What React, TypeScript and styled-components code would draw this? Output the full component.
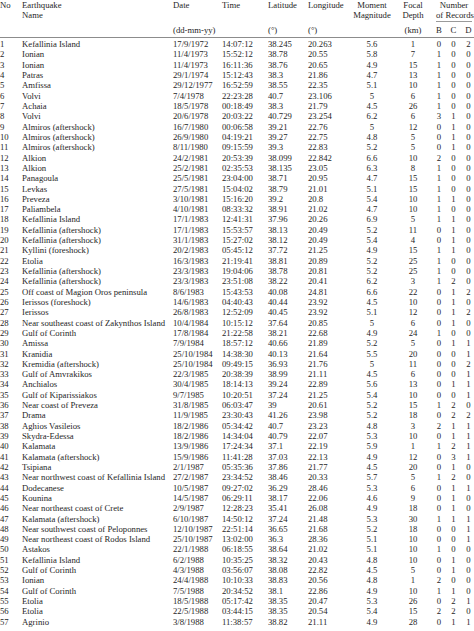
import React from "react";
import styled, { createGlobalStyle } from "styled-components";

const Global = createGlobalStyle`
  html, body {
    margin: 0;
    padding: 0;
    background: #ffffff;
    overflow: hidden;
  }
  body {
    font-family: "Liberation Serif", "Times New Roman", serif;
    color: #262626;
  }
`;

const Page = styled.div`
  width: 474px;
  height: 631px;
  overflow: hidden;
`;

const Table = styled.table`
  border-collapse: collapse;
  table-layout: fixed;
  width: 476px;
  font-family: "Liberation Serif", "Times New Roman", serif;
  color: #262626;
  font-size: 8.7px;
  line-height: 10.32px;
`;

const HeadCell = styled.th<{ $align?: "left" | "center"; $pt?: number; $pb?: number }>`
  font-weight: normal;
  padding: ${(p) => p.$pt ?? 0}px 0 ${(p) => p.$pb ?? 0}px 0;
  text-align: ${(p) => p.$align ?? "left"};
  vertical-align: top;
  white-space: nowrap;
`;

const GroupLabel = styled.div`
  margin: 0 4px 0 4px;
  text-align: center;
  border-bottom: 1px solid #9a9a9a;
`;

const UnitsRow = styled.tr`
  border-bottom: 1.6px solid #8c8c8c;
`;

const BodyRow = styled.tr<{ $first?: boolean }>`
  & > td {
    padding-top: ${(p) => (p.$first ? 1.2 : 0)}px;
  }
`;

const Cell = styled.td<{ $align?: "left" | "center" }>`
  padding: 0;
  text-align: ${(p) => p.$align ?? "left"};
  white-space: nowrap;
  overflow: visible;
`;

const widths = [22, 151, 49, 46, 40, 42, 44, 38, 14, 15, 15];

const rows: string[] = [
  "1|Kefallinia Island|17/9/1972|14:07:12|38.245|20.263|5.6|1|0|0|2",
  "2|Ionian|11/4/1973|15:52:12|38.78|20.55|5.8|7|1|0|0",
  "3|Ionian|11/4/1973|16:11:36|38.76|20.65|4.9|15|1|0|0",
  "4|Patras|29/1/1974|15:12:43|38.3|21.86|4.7|13|1|0|0",
  "5|Amfissa|29/12/1977|16:52:59|38.55|22.35|5.1|10|1|0|0",
  "6|Volvi|7/4/1978|22:23:28|40.7|23.106|5|6|1|0|0",
  "7|Achaia|18/5/1978|00:18:49|38.3|21.79|4.5|26|1|0|0",
  "8|Volvi|20/6/1978|20:03:22|40.729|23.254|6.2|6|3|1|0",
  "9|Almiros (aftershock)|16/7/1980|00:06:58|39.21|22.76|5|12|0|1|0",
  "10|Almiros (aftershock)|26/9/1980|04:19:21|39.27|22.75|4.8|5|0|1|0",
  "11|Almiros (aftershock)|8/11/1980|09:15:59|39.3|22.83|5.2|5|0|1|0",
  "12|Alkion|24/2/1981|20:53:39|38.099|22.842|6.6|10|2|0|0",
  "13|Alkion|25/2/1981|02:35:53|38.135|23.05|6.3|8|1|0|0",
  "14|Panagoula|25/5/1981|23:04:00|38.71|20.95|4.7|15|1|0|0",
  "15|Levkas|27/5/1981|15:04:02|38.79|21.01|5.1|15|1|0|0",
  "16|Preveza|3/10/1981|15:16:20|39.2|20.8|5.4|10|1|1|0",
  "17|Paliambela|4/10/1981|08:33:32|38.91|21.02|4.7|10|1|0|0",
  "18|Kefallinia Island|17/1/1983|12:41:31|37.96|20.26|6.9|5|1|1|0",
  "19|Kefallinia (aftershock)|17/1/1983|15:53:57|38.13|20.49|5.2|11|0|1|0",
  "20|Kefallinia (aftershock)|31/1/1983|15:27:02|38.12|20.49|5.4|4|0|1|0",
  "21|Kyllini (foreshock)|20/2/1983|05:45:12|37.72|21.25|4.9|15|1|1|0",
  "22|Etolia|16/3/1983|21:19:41|38.81|20.89|5.2|25|1|0|0",
  "23|Kefallinia (aftershock)|23/3/1983|19:04:06|38.78|20.81|5.2|25|1|0|0",
  "24|Kefallinia (aftershock)|23/3/1983|23:51:08|38.22|20.41|6.2|3|1|2|0",
  "25|Off coast of Magion Oros peninsula|8/6/1983|15:43:53|40.08|24.81|6.6|22|0|1|2",
  "26|Ierissos (foreshock)|14/6/1983|04:40:43|40.44|23.92|4.5|10|0|1|0",
  "27|Ierissos|26/8/1983|12:52:09|40.45|23.92|5.1|12|0|1|2",
  "28|Near southeast coast of Zakynthos Island|10/4/1984|10:15:12|37.64|20.85|5|6|0|1|0",
  "29|Gulf of Corinth|17/8/1984|21:22:58|38.21|22.68|4.9|24|1|0|0",
  "30|Amissa|7/9/1984|18:57:12|40.66|21.89|5.2|5|0|1|1",
  "31|Kranidia|25/10/1984|14:38:30|40.13|21.64|5.5|20|0|0|1",
  "32|Kremidia (aftershock)|25/10/1984|09:49:15|36.93|21.76|5|11|0|0|2",
  "33|Gulf of Amvrakikos|22/3/1985|20:38:39|38.99|21.11|4.5|6|0|0|1",
  "34|Anchialos|30/4/1985|18:14:13|39.24|22.89|5.6|13|0|1|1",
  "35|Gulf of Kiparissiakos|9/7/1985|10:20:51|37.24|21.25|5.4|10|0|0|1",
  "36|Near coast of Preveza|31/8/1985|06:03:47|39|20.61|5.2|15|1|2|0",
  "37|Drama|11/9/1985|23:30:43|41.26|23.98|5.2|18|0|2|2",
  "38|Aghios Vasileios|18/2/1986|05:34:42|40.7|23.23|4.8|3|2|1|1",
  "39|Skydra-Edessa|18/2/1986|14:34:04|40.79|22.07|5.3|10|0|1|1",
  "40|Kalamata|13/9/1986|17:24:34|37.1|22.19|5.9|1|1|2|1",
  "41|Kalamata (aftershock)|15/9/1986|11:41:28|37.03|22.13|4.9|12|0|3|1",
  "42|Tsipiana|2/1/1987|05:35:36|37.86|21.77|4.5|20|0|1|0",
  "43|Near northwest coast of Kefallinia Island|27/2/1987|23:34:52|38.46|20.33|5.7|5|1|2|0",
  "44|Dodecanese|10/5/1987|09:27:02|36.29|28.46|5.3|6|0|1|1",
  "45|Kounina|14/5/1987|06:29:11|38.17|22.06|4.6|9|0|1|0",
  "46|Near northeast coast of Crete|2/9/1987|12:28:23|35.41|26.08|4.9|18|0|1|0",
  "47|Kalamata (aftershock)|6/10/1987|14:50:12|37.24|21.48|5.3|30|1|1|1",
  "48|Near southwest coast of Peloponnes|12/10/1987|22:51:14|36.65|21.68|5.2|18|0|0|1",
  "49|Near northeast coast of Rodos Island|25/10/1987|13:02:00|36.3|28.36|5.1|10|0|0|1",
  "50|Astakos|22/1/1988|06:18:55|38.64|21.02|5.1|10|1|0|0",
  "51|Kefallinia Island|6/2/1988|10:35:25|38.32|20.43|4.8|10|0|1|0",
  "52|Gulf of Corinth|4/3/1988|03:56:07|38.08|22.82|4.5|5|0|1|0",
  "53|Ionian|24/4/1988|10:10:33|38.83|20.56|4.8|1|2|0|0",
  "54|Gulf of Corinth|7/5/1988|20:34:52|38.1|22.86|4.9|10|1|1|0",
  "55|Etolia|18/5/1988|05:17:42|38.35|20.47|5.3|26|0|2|1",
  "56|Etolia|22/5/1988|03:44:15|38.35|20.54|5.4|15|2|2|0",
  "57|Agrinio|3/8/1988|11:38:57|38.82|21.11|4.9|28|0|1|1",
];

const aligns: ("left" | "center")[] = [
  "left", "left", "left", "left", "left", "left",
  "center", "center", "center", "center", "center",
];

export default function App() {
  return (
    <Page>
      <Global />
      <Table>
        <colgroup>
          {widths.map((w, i) => (
            <col key={i} style={{ width: w }} />
          ))}
        </colgroup>
        <thead>
          <tr>
            <HeadCell>No</HeadCell>
            <HeadCell>
              Earthquake
              <br />
              Name
            </HeadCell>
            <HeadCell>Date</HeadCell>
            <HeadCell>Time</HeadCell>
            <HeadCell>Latitude</HeadCell>
            <HeadCell>Longitude</HeadCell>
            <HeadCell $align="center">
              Moment
              <br />
              Magnitude
            </HeadCell>
            <HeadCell $align="center">
              Focal
              <br />
              Depth
            </HeadCell>
            <HeadCell colSpan={3}>
              <GroupLabel>
                Number
                <br />
                of Records.
              </GroupLabel>
            </HeadCell>
          </tr>
          <UnitsRow>
            <HeadCell $pt={3} $pb={2} />
            <HeadCell $pt={3} $pb={2} />
            <HeadCell $pt={3} $pb={2}>(dd-mm-yy)</HeadCell>
            <HeadCell $pt={3} $pb={2} />
            <HeadCell $pt={3} $pb={2}>(°)</HeadCell>
            <HeadCell $pt={3} $pb={2}>(°)</HeadCell>
            <HeadCell $pt={3} $pb={2} />
            <HeadCell $pt={3} $pb={2} $align="center">(km)</HeadCell>
            <HeadCell $pt={3} $pb={2} $align="center">B</HeadCell>
            <HeadCell $pt={3} $pb={2} $align="center">C</HeadCell>
            <HeadCell $pt={3} $pb={2} $align="center">D</HeadCell>
          </UnitsRow>
        </thead>
        <tbody>
          {rows.map((r, i) => (
            <BodyRow key={i} $first={i === 0}>
              {r.split("|").map((c, j) => (
                <Cell key={j} $align={aligns[j]}>
                  {c}
                </Cell>
              ))}
            </BodyRow>
          ))}
        </tbody>
      </Table>
    </Page>
  );
}
